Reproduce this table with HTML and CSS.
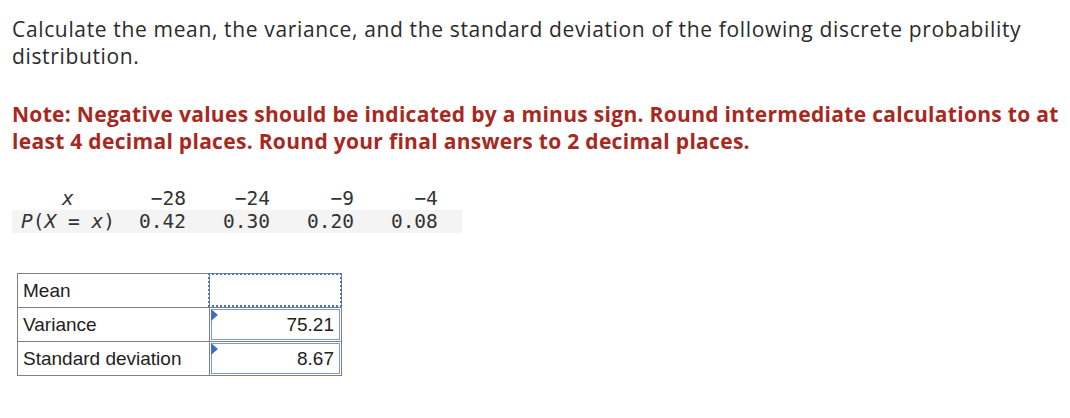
FILE: index.html
```html
<!DOCTYPE html>
<html>
<head>
<meta charset="utf-8">
<link rel="stylesheet" href="styles.css">
</head>
<body>
<div class="page">
  <p class="question">Calculate the mean, the variance, and the standard deviation of the following discrete probability distribution.</p>
  <p class="note">Note: Negative values should be indicated by a minus sign. Round intermediate calculations to at least 4 decimal places. Round your final answers to 2 decimal places.</p>
  <table class="dist">
    <tr class="row-x">
      <td class="lbl"><i>x</i></td>
      <td class="first">−28</td><td>−24</td><td>−9</td><td>−4</td>
    </tr>
    <tr class="row-p">
      <td class="lbl"><i>P</i>(<i>X</i> = <i>x</i>)</td>
      <td class="first">0.42</td><td>0.30</td><td>0.20</td><td>0.08</td>
    </tr>
  </table>
  <table class="answers">
    <tr>
      <td class="name">Mean</td>
      <td class="cell"><div class="input focus"></div></td>
    </tr>
    <tr>
      <td class="name">Variance</td>
      <td class="cell"><div class="input filled"><span class="flag"></span>75.21</div></td>
    </tr>
    <tr>
      <td class="name">Standard deviation</td>
      <td class="cell"><div class="input filled"><span class="flag"></span>8.67</div></td>
    </tr>
  </table>
</div>
</body>
</html>
```
FILE: styles.css
```css
html, body { margin: 0; padding: 0; background: #fff; }
.page {
  padding: 16px 4px 0 12px;
  font-family: "Open Sans", sans-serif;
  font-size: 21px;
  color: #2b2b2b;
}
.question { margin: 0; line-height: 27px; letter-spacing: 0.65px; }
.note {
  margin: 31px 0 0 0;
  line-height: 27px;
  color: #a8281e;
  font-weight: bold;
  letter-spacing: 0.3px;
}
.dist {
  margin-top: 32px;
  border-collapse: collapse;
  font-family: "DejaVu Sans Mono", monospace;
  font-size: 19.5px;
  color: #333;
}
.dist td {
  text-align: right;
  padding: 0 0 0 37px;
  height: 23px;
  line-height: 23px;
}
.dist td.first { padding-left: 15px; }
.dist td.lbl { text-align: center; padding: 0 9px; }
.dist .row-p { background: #f4f4f4; }
.dist td:last-child { padding-right: 24px; }

.answers {
  margin: 40px 0 0 5px;
  border-collapse: collapse;
  font-family: "Liberation Sans", Arial, sans-serif;
  font-size: 19px;
  color: #222;
}
.answers td { border: 1px solid #808080; height: 33px; padding: 0; }
.answers td.name { width: 186px; padding-left: 5px; }
.answers td.cell { width: 131px; }
.input {
  position: relative;
  box-sizing: border-box;
  height: 31px;
  margin: 1px;
  text-align: right;
  padding-right: 5px;
  line-height: 29px;
}
.input.focus {
  border: 2px dotted #4a78c0;
  margin: -1px -1px 0 -2px;
  height: 34px;
}
.input.filled { border: 1px solid #7a9bd0; }
.flag {
  position: absolute;
  left: -1px;
  top: -1px;
  width: 0; height: 0;
  border-top: 6px solid transparent;
  border-bottom: 6px solid transparent;
  border-left: 7px solid #3f6fc0;
}
```
